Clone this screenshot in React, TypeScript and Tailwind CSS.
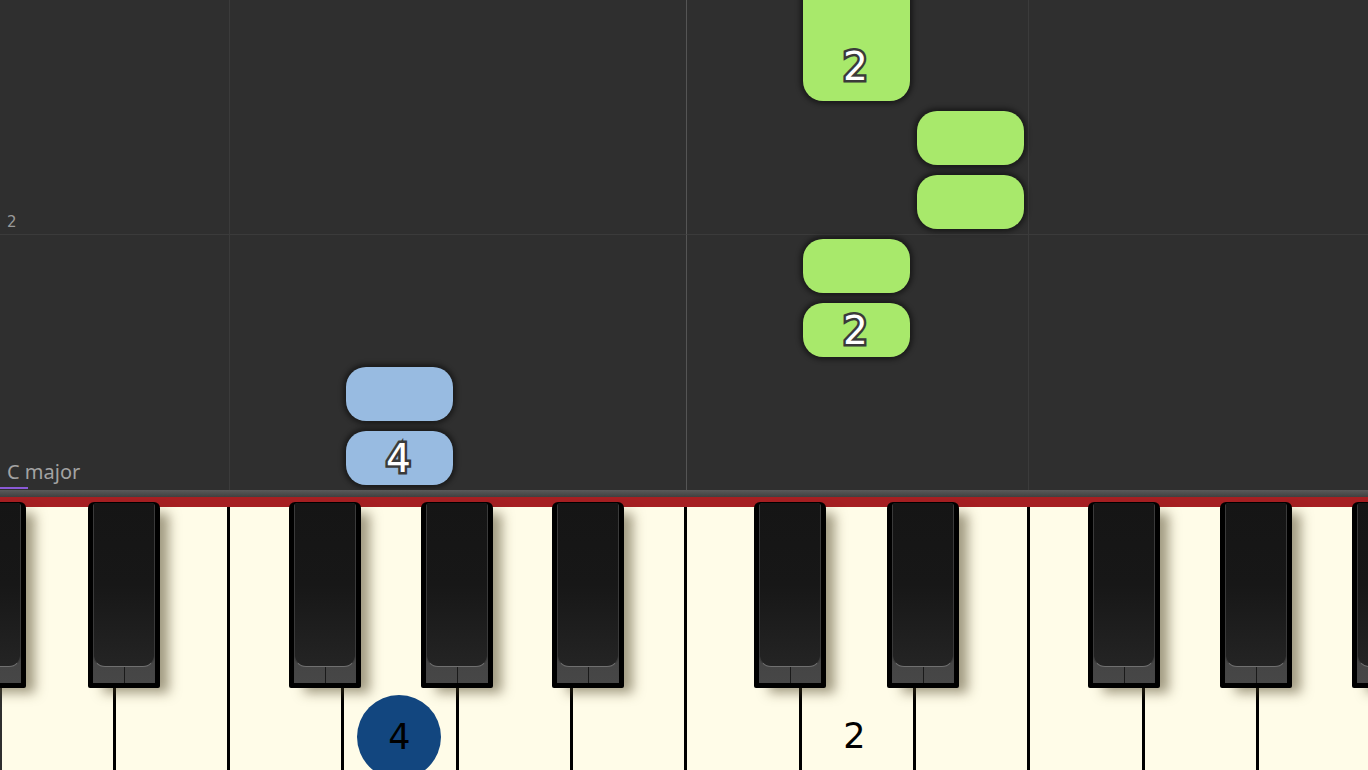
import React from "react";

const WHITE_W = 114.33;

// black keys: left offset in px (relative to piano left)
const blackKeys = [-46, 88, 289, 421, 552, 754, 887, 1088, 1220, 1352];

type Note = { x: number; y: number; h: number; color: "blue" | "green"; label?: string; labelY?: number };

const notes: Note[] = [
  { x: 803, y: -40, h: 141, color: "green", label: "2", labelY: 106 },
  { x: 917, y: 111, h: 54, color: "green" },
  { x: 917, y: 175, h: 54, color: "green" },
  { x: 803, y: 239, h: 54, color: "green" },
  { x: 803, y: 303, h: 54, color: "green", label: "2" },
  { x: 346, y: 367, h: 54, color: "blue" },
  { x: 346, y: 431, h: 54, color: "blue", label: "4" },
];

const cellCols = ["", "border-l border-[#3b3b3b]", "border-l border-[#555555]", "border-l border-[#3b3b3b]"];

function NoteBlock({ n }: { n: Note }) {
  return (
    <div
      className={`absolute w-[107px] rounded-[20px] shadow-[0_0_5px_3px_rgba(0,0,0,0.45)] ${
        n.color === "blue" ? "bg-[#98bbe1]" : "bg-[#a8e96b]"
      }`}
      style={{ left: n.x, top: n.y, height: n.h }}
    >
      {n.label && (
        <div
          className="absolute inset-x-0 flex items-center justify-center text-[39px] leading-none text-white font-['DejaVu_Sans',sans-serif] [-webkit-text-stroke:5px_#3a3a3a] [paint-order:stroke_fill] pr-[2px]"
          style={n.labelY !== undefined ? { top: n.labelY - 19, height: 38 } : { top: 0, bottom: 0 }}
        >
          {n.label}
        </div>
      )}
    </div>
  );
}

function BlackKey({ left }: { left: number }) {
  return (
    <div
      className="absolute top-[12px] w-[72px] h-[186px] bg-black rounded-t-[6px] rounded-b-[2px] px-[5px] pb-[5px] pt-[1px] shadow-[12px_8px_12px_-3px_rgba(70,60,30,0.5)]"
      style={{ left }}
    >
      <div className="relative flex h-full flex-col rounded-t-[4px] bg-gradient-to-b from-[#333] to-[#474747] overflow-hidden">
        <div className="flex-1 rounded-b-[12px] border-x border-b border-x-[#3a3a3a] border-b-[#707070] bg-gradient-to-b from-[#151515] via-[#171717] to-[#242424]" />
        <div className="h-[16px] flex justify-center">
          <div className="w-px h-full bg-[#1a1a1a]" />
        </div>
      </div>
    </div>
  );
}

export default function App() {
  return (
    <div className="w-[1368px] h-[770px] overflow-hidden bg-[#2f2f2f] font-['DejaVu_Sans',sans-serif] flex flex-col">
      {/* note canvas */}
      <div className="relative h-[490px] shrink-0">
        <div className="grid h-full grid-cols-[229px_457px_342px_1fr] grid-rows-[234px_1fr]">
          {[0, 1].map((r) =>
            cellCols.map((c, i) => (
              <div key={`${r}-${i}`} className={`${c} ${r === 1 ? "border-t border-t-[#3b3b3b]" : ""}`} />
            ))
          )}
        </div>

        <span className="absolute left-[7px] top-[211px] text-[15px] text-[#9a9a9a]">2</span>
        <span className="absolute left-[7px] top-[457px] text-[20px] text-[#a3a3a3] font-['Noto_Sans',sans-serif]">C major</span>
        <div className="absolute left-0 bottom-[1px] w-[28px] h-[2px] bg-[#8a5ad6]" />

        {notes.map((n, i) => (
          <NoteBlock key={i} n={n} />
        ))}
      </div>

      {/* piano */}
      <div className="relative flex-1 flex flex-col">
        <div className="h-[7px] bg-gradient-to-b from-[#5a5a5a] to-[#404040]" />
        <div className="h-[10px] bg-[#a61f22]" />
        <div className="flex flex-1 ml-[1.5px]">
          {Array.from({ length: 12 }).map((_, i) => (
            <div
              key={i}
              className="relative shrink-0 h-full bg-[#fffce8] border-r-[3px] border-black"
              style={{ width: WHITE_W }}
            >
              {i === 3 && (
                <div className="absolute left-[13px] top-[188px] w-[84px] h-[84px] rounded-full bg-[#12467f] flex items-center justify-center text-[35px] text-black">
                  4
                </div>
              )}
              {i === 7 && (
                <div className="absolute inset-x-0 top-[212px] text-center text-[35px] leading-none text-black pr-[6px]">
                  2
                </div>
              )}
            </div>
          ))}
        </div>
        {blackKeys.map((l) => (
          <BlackKey key={l} left={l} />
        ))}
      </div>
    </div>
  );
}
